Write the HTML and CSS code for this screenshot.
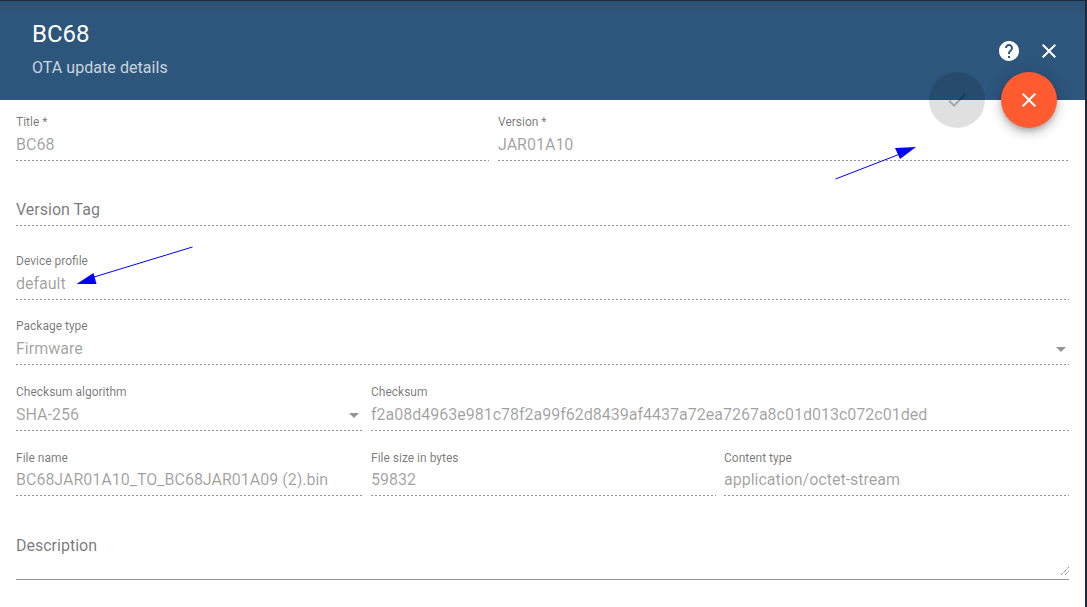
FILE: index.html
```html
<!DOCTYPE html>
<html lang="en">
<head>
<meta charset="utf-8">
<title>BC68 - OTA update details</title>
<link rel="stylesheet" href="styles.css">
</head>
<body>
<div class="panel">
  <header class="header">
    <div class="heading">
      <div class="title">BC68</div>
      <div class="subtitle">OTA update details</div>
    </div>
    <div class="header-actions">
      <svg class="icon" viewBox="0 0 24 24"><path fill="#fff" d="M12 2C6.48 2 2 6.48 2 12s4.48 10 10 10 10-4.48 10-10S17.52 2 12 2zm1 17h-2v-2h2v2zm2.07-7.75l-.9.92C13.45 12.9 13 13.5 13 15h-2v-.5c0-1.1.45-2.1 1.17-2.83l1.24-1.26c.37-.36.59-.86.59-1.41 0-1.1-.9-2-2-2s-2 .9-2 2H8c0-2.21 1.79-4 4-4s4 1.79 4 4c0 .88-.36 1.68-.93 2.25z"/></svg>
      <svg class="icon" viewBox="0 0 24 24"><path fill="#fff" d="M19 6.41L17.59 5 12 10.59 6.41 5 5 6.41 10.59 12 5 17.59 6.41 19 12 13.41 17.59 19 19 17.59 13.41 12z"/></svg>
    </div>
  </header>

  <form class="form">
    <div class="row row-title">
      <div class="field"><span class="label">Title *</span><span class="value">BC68</span></div>
      <div class="field"><span class="label">Version *</span><span class="value">JAR01A10</span></div>
    </div>
    <div class="row">
      <div class="field"><span class="placeholder">Version Tag</span></div>
    </div>
    <div class="row row-profile">
      <div class="field"><span class="label">Device profile</span><span class="value">default</span></div>
    </div>
    <div class="row">
      <div class="field"><span class="label">Package type</span><span class="value">Firmware</span><span class="caret"></span></div>
    </div>
    <div class="row row-checksum">
      <div class="field"><span class="label">Checksum algorithm</span><span class="value">SHA-256</span><span class="caret"></span></div>
      <div class="field"><span class="label">Checksum</span><span class="value">f2a08d4963e981c78f2a99f62d8439af4437a72ea7267a8c01d013c072c01ded</span></div>
    </div>
    <div class="row row-file">
      <div class="field"><span class="label">File name</span><span class="value">BC68JAR01A10_TO_BC68JAR01A09 (2).bin</span></div>
      <div class="field"><span class="label">File size in bytes</span><span class="value">59832</span></div>
      <div class="field"><span class="label">Content type</span><span class="value">application/octet-stream</span></div>
    </div>
    <div class="description">
      <span class="placeholder">Description</span>
      <svg class="grip" viewBox="0 0 8 8"><path d="M0 8L8 0M4 8L8 4" stroke="#555" stroke-width="1" stroke-dasharray="1 1" fill="none"/></svg>
    </div>
  </form>

  <div class="fab fab-check">
    <svg viewBox="0 0 24 24"><path fill="rgba(0,0,0,.26)" d="M9 16.17L4.83 12l-1.42 1.41L9 19 21 7l-1.41-1.41z"/></svg>
  </div>
  <div class="fab fab-close">
    <svg viewBox="0 0 24 24"><path fill="#fff" d="M19 6.41L17.59 5 12 10.59 6.41 5 5 6.41 10.59 12 5 17.59 6.41 19 12 13.41 17.59 19 19 17.59 13.41 12z"/></svg>
  </div>

  <svg class="arrows" viewBox="0 0 1087 607">
    <line x1="835.5" y1="179" x2="900" y2="154" stroke="#0000ff" stroke-width="1"/>
    <polygon points="916,147 895,148 900,159" fill="#0000ff"/>
    <line x1="192.500" y1="247" x2="94" y2="277" stroke="#0000ff" stroke-width="1"/>
    <polygon points="76.500,284 93.500,273 96.500,284" fill="#0000ff"/>
  </svg>
</div>
</body>
</html>
```

FILE: styles.css
```css
* { box-sizing: border-box; }
html, body { margin: 0; height: 100%; overflow: hidden; background: #fff; }
body { font-family: Roboto, "Liberation Sans", sans-serif; }

.panel {
  position: relative;
  width: 1087px;
  height: 607px;
  padding-right: 2px;
  border-top: 1px solid #1c2a3c;
  background: #fff;
  box-shadow: inset -2px 0 0 #1c2a3c;
}

.header {
  display: flex;
  justify-content: space-between;
  height: 99px;
  padding: 20px 24px 0 32px;
  background: linear-gradient(#2a5072, #2d567d 14px);
  color: #fff;
}
.title { font-size: 24px; line-height: 26px; }
.subtitle { margin-top: 11px; font-size: 16px; line-height: 20px; letter-spacing: .05px; color: rgba(255,255,255,.75); }
.header-actions { display: flex; gap: 16px; padding-top: 18px; }
.icon { width: 24px; height: 24px; }

.form { padding: 0 16px; }
.row { display: flex; gap: 9px; height: 65px; }
.row-title { height: 61px; display: grid; grid-template-columns: 473px 1fr; }
.row-profile { height: 74px; }
.row-checksum { height: 66px; display: grid; grid-template-columns: 346px 1fr; }
.row-file { display: grid; gap: 8px; grid-template-columns: 347px 345px 1fr; }
.row-file .field:first-child { margin-right: 1px; }
.row-file .label { margin-bottom: 5px; }

.field {
  position: relative;
  flex: 1;
  min-width: 0;
  display: flex;
  flex-direction: column;
  justify-content: flex-end;
  padding-bottom: 6px;
  background: linear-gradient(to right, rgba(0,0,0,.42) 50%, transparent 0) left bottom / 4px 1px repeat-x;
}

.label { font-size: 12px; line-height: 14px; margin-bottom: 6px; color: rgba(0,0,0,.54); }
.value { font-size: 16px; line-height: 20px; color: rgba(0,0,0,.38); white-space: nowrap; }
.placeholder { font-size: 16px; line-height: 20px; color: rgba(0,0,0,.54); }
.caret {
  position: absolute;
  right: 3px;
  bottom: 13px;
  border-left: 5px solid transparent;
  border-right: 5px solid transparent;
  border-top: 5px solid rgba(0,0,0,.42);
}

.description {
  position: relative;
  height: 84px;
  padding-top: 40px;
  border-bottom: 1px solid #949494;
}
.grip { position: absolute; right: 0; bottom: 4px; width: 8px; height: 8px; }

.fab {
  position: absolute;
  top: 71px;
  width: 56px;
  height: 56px;
  border-radius: 50%;
  display: flex;
  align-items: center;
  justify-content: center;
}
.fab svg { width: 24px; height: 24px; }
.fab-check { left: 929px; background: rgba(0,0,0,.12); }
.fab-close {
  left: 1001px;
  background: #ff5a30;
  box-shadow: 0 3px 5px -1px rgba(0,0,0,.2), 0 6px 10px 0 rgba(0,0,0,.14), 0 1px 18px 0 rgba(0,0,0,.12);
}

.arrows { position: absolute; left: 0; top: -1px; width: 1087px; height: 607px; pointer-events: none; }
```
